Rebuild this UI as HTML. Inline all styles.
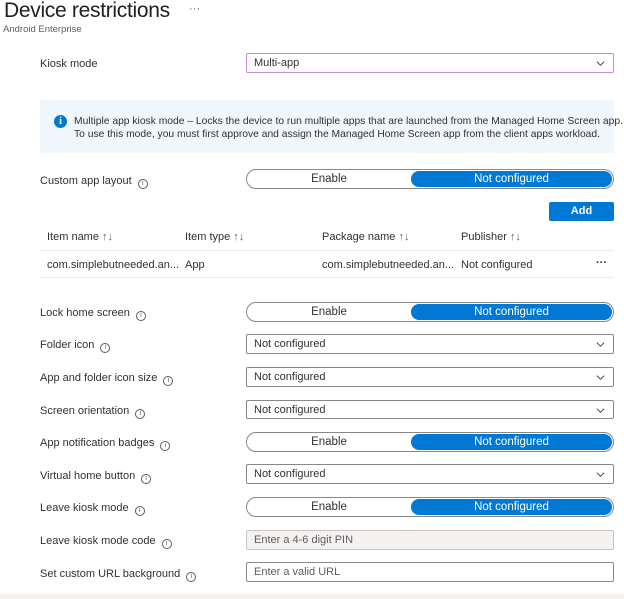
<!DOCTYPE html>
<html><head><meta charset="utf-8"><style>
*{box-sizing:border-box;margin:0;padding:0}
body{width:624px;height:599px;background:#fff;font-family:"Liberation Sans",sans-serif;color:#323130;position:relative;overflow:hidden;font-size:11px}
.a{position:absolute;white-space:nowrap}
.lbl{position:absolute;left:40px;font-size:11px;line-height:14px}
.i{display:inline-block;width:10px;height:10px;border:1px solid #605e5c;border-radius:50%;font-size:7px;line-height:8px;text-align:center;margin-left:6px;vertical-align:-1px;color:#605e5c}
.box{position:absolute;left:246px;width:368px;border:1px solid #8a8886;border-radius:2px;font-size:11px;padding-left:7px}
.chev{position:absolute;right:8px;top:5px;width:9px;height:9px}
.tog{position:absolute;left:246px;width:368px;height:20px;border:1px solid #8a8886;border-radius:10px;font-size:11.5px}
.tog .e{position:absolute;left:0;width:164px;top:0;line-height:18px;text-align:center}
.tog .n{position:absolute;left:164px;right:1px;top:1px;bottom:1px;background:#0078d4;border-radius:9px;color:#fff;text-align:center;line-height:16px}
.th{position:absolute;top:230px;font-size:11px}
.td{position:absolute;top:258px;font-size:11px}
</style></head><body>
<div class="a" style="left:4px;top:-1px;font-size:21px;line-height:24px;color:#201f1e;letter-spacing:-0.3px">Device restrictions</div>
<div class="a" style="left:189px;top:3px;font-size:11px;color:#605e5c">···</div>
<div class="a" style="left:3px;top:24px;font-size:9.5px;color:#605e5c">Android Enterprise</div>

<div class="lbl" style="top:57px">Kiosk mode</div>
<div class="box" style="top:53px;height:20px;line-height:18px;border-color:#c490d1">Multi-app<svg class="chev" viewBox="0 0 10 10"><path d="M1 3l4 4 4-4" fill="none" stroke="#323130" stroke-width="1"/></svg></div>

<div class="a" style="left:40px;top:100px;width:574px;height:53px;background:#eff6fc"></div>
<div class="a" style="left:54px;top:115px;width:13px;height:13px;border-radius:50%;background:#0078d4;color:#fff;font-size:10px;font-weight:bold;text-align:center;line-height:13px;font-family:'Liberation Serif',serif">i</div>
<div class="a" style="left:74px;top:115px;font-size:10.3px;line-height:13px">Multiple app kiosk mode – Locks the device to run multiple apps that are launched from the Managed Home Screen app.<br>To use this mode, you must first approve and assign the Managed Home Screen app from the client apps workload.</div>

<div class="lbl" style="top:174px">Custom app layout<span class="i">i</span></div>
<div class="tog" style="top:169px"><div class="e">Enable</div><div class="n">Not configured</div></div>

<div class="a" style="left:549px;top:202px;width:65px;height:19px;background:#0078d4;color:#fff;font-weight:bold;text-align:center;line-height:19px;border-radius:2px">Add</div>

<div class="th" style="left:47px;top:231px">Item name <span style="color:#605e5c">↑↓</span></div>
<div class="th" style="left:185px;top:231px">Item type <span style="color:#605e5c">↑↓</span></div>
<div class="th" style="left:322px;top:231px">Package name <span style="color:#605e5c">↑↓</span></div>
<div class="th" style="left:461px;top:231px">Publisher <span style="color:#605e5c">↑↓</span></div>
<div class="a" style="left:40px;top:250px;width:574px;height:1px;background:#edebe9"></div>
<div class="td" style="left:47px;top:259px">com.simplebutneeded.an...</div>
<div class="td" style="left:185px;top:259px">App</div>
<div class="td" style="left:322px;top:259px">com.simplebutneeded.an...</div>
<div class="td" style="left:461px;top:259px">Not configured</div>
<div class="td" style="left:596px;top:257px;font-weight:bold">···</div>
<div class="a" style="left:40px;top:277px;width:574px;height:1px;background:#edebe9"></div>

<div class="lbl" style="top:306px">Lock home screen<span class="i">i</span></div>
<div class="tog" style="top:302px"><div class="e">Enable</div><div class="n">Not configured</div></div>

<div class="lbl" style="top:338px">Folder icon<span class="i">i</span></div>
<div class="box" style="top:334px;height:20px;line-height:19px">Not configured<svg class="chev" viewBox="0 0 10 10"><path d="M1 3l4 4 4-4" fill="none" stroke="#323130"/></svg></div>

<div class="lbl" style="top:371px">App and folder icon size<span class="i">i</span></div>
<div class="box" style="top:367px;height:20px;line-height:19px">Not configured<svg class="chev" viewBox="0 0 10 10"><path d="M1 3l4 4 4-4" fill="none" stroke="#323130"/></svg></div>

<div class="lbl" style="top:404px">Screen orientation<span class="i">i</span></div>
<div class="box" style="top:400px;height:19px;line-height:18px">Not configured<svg class="chev" viewBox="0 0 10 10"><path d="M1 3l4 4 4-4" fill="none" stroke="#323130"/></svg></div>

<div class="lbl" style="top:436px">App notification badges<span class="i">i</span></div>
<div class="tog" style="top:432px"><div class="e">Enable</div><div class="n">Not configured</div></div>

<div class="lbl" style="top:469px">Virtual home button<span class="i">i</span></div>
<div class="box" style="top:464px;height:20px;line-height:19px">Not configured<svg class="chev" viewBox="0 0 10 10"><path d="M1 3l4 4 4-4" fill="none" stroke="#323130"/></svg></div>

<div class="lbl" style="top:501px">Leave kiosk mode<span class="i">i</span></div>
<div class="tog" style="top:497px"><div class="e">Enable</div><div class="n">Not configured</div></div>

<div class="lbl" style="top:534px">Leave kiosk mode code<span class="i">i</span></div>
<div class="box" style="top:530px;height:20px;line-height:19px;background:#f3f2f1;border-color:#c8c6c4;color:#605e5c">Enter a 4-6 digit PIN</div>

<div class="lbl" style="top:567px">Set custom URL background<span class="i">i</span></div>
<div class="box" style="top:562px;height:20px;line-height:19px;color:#605e5c">Enter a valid URL</div>

<div class="a" style="left:0;top:594px;width:624px;height:5px;background:#f3f2f1"></div>
</body></html>
